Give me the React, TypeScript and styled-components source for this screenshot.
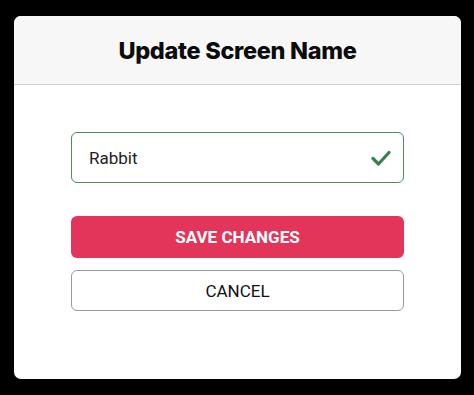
import React, { useState } from 'react'
import styled, { createGlobalStyle } from 'styled-components'

const GlobalStyle = createGlobalStyle`
  html, body {
    margin: 0;
    padding: 0;
    background: #000;
  }
  * {
    box-sizing: border-box;
  }
`

const Page = styled.div`
  width: 474px;
  height: 395px;
  padding: 16px 13px 16px 14px;
  background: #000;
`

const Card = styled.div`
  height: 363px;
  background: #fff;
  border-radius: 7px;
  overflow: hidden;
  display: flex;
  flex-direction: column;
`

const Header = styled.div`
  height: 69px;
  flex-shrink: 0;
  background: #f7f7f7;
  border-bottom: 1px solid #cfcfcf;
  display: flex;
  align-items: center;
  justify-content: center;
`

const Title = styled.h1`
  margin: 0;
  font-family: Inter, "Noto Sans", sans-serif;
  font-weight: 800;
  font-size: 23.5px;
  letter-spacing: -0.3px;
  color: #0c0c0c;
`

const Body = styled.div`
  padding: 47px 57px 0;
  display: flex;
  flex-direction: column;
`

const Field = styled.label`
  height: 51px;
  border: 1px solid #4f8a61;
  border-radius: 6px;
  display: flex;
  align-items: center;
  padding: 0 12px 0 17px;
  margin-bottom: 33px;
`

const Input = styled.input`
  flex: 1;
  border: none;
  outline: none;
  background: transparent;
  font-family: Roboto, "Liberation Sans", sans-serif;
  font-size: 17px;
  color: #222;
  padding: 0;
`

const Button = styled.button<{ $primary?: boolean }>`
  height: ${p => (p.$primary ? '42px' : '41px')};
  border-radius: 6px;
  border: ${p => (p.$primary ? 'none' : '1px solid #9a9a9a')};
  background: ${p => (p.$primary ? '#e23559' : '#fff')};
  color: ${p => (p.$primary ? '#fff' : '#111')};
  font-family: Roboto, "Liberation Sans", sans-serif;
  font-weight: ${p => (p.$primary ? 700 : 400)};
  font-size: 17px;
  text-transform: uppercase;
  cursor: pointer;
  padding: 0;
  & + & {
    margin-top: 12px;
  }
`

const Check = () => (
  <svg width="20" height="16" viewBox="0 0 20 16" fill="none">
    <path d="M2 8.5 L7.5 14 L18 2.5" stroke="#3d7f50" strokeWidth="3.2" strokeLinecap="round" strokeLinejoin="round" />
  </svg>
)

const App = () => {
  const [name, setName] = useState('Rabbit')

  return <>
    <GlobalStyle />
    <Page>
      <Card>
        <Header>
          <Title>Update Screen Name</Title>
        </Header>
        <Body>
          <Field>
            <Input value={name} onChange={(e) => setName(e.target.value)} />
            {name.length > 0 && <Check />}
          </Field>
          <Button $primary>Save Changes</Button>
          <Button>Cancel</Button>
        </Body>
      </Card>
    </Page>
  </>
}

export default App
